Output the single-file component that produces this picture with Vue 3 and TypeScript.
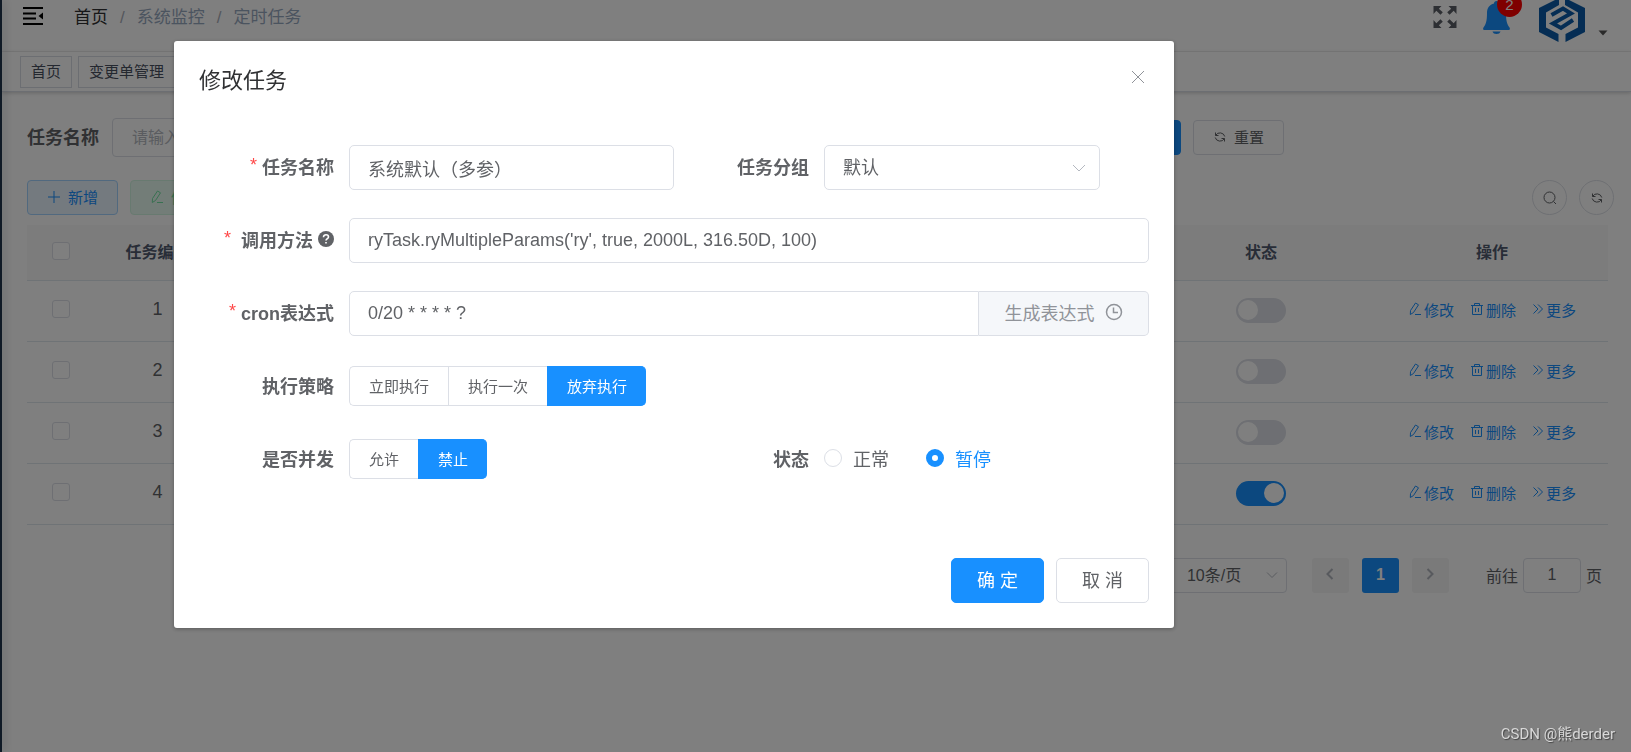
<script setup lang="ts">
import { ref } from 'vue'

interface Job {
  id: number
  running: boolean
}

const jobs = ref<Job[]>([
  { id: 1, running: false },
  { id: 2, running: false },
  { id: 3, running: false },
  { id: 4, running: true },
])

const misfireOptions = ['立即执行', '执行一次', '放弃执行']
const concurrentOptions = ['允许', '禁止']
const statusOptions = ['正常', '暂停']

const form = ref({
  name: '系统默认（多参）',
  group: '默认',
  target: "ryTask.ryMultipleParams('ry', true, 2000L, 316.50D, 100)",
  cron: '0/20 * * * * ?',
  misfire: '放弃执行',
  concurrent: '禁止',
  status: '暂停',
})

const keyword = ref('')
const pageSize = ref('10条/页')
const pageNumber = ref('1')
</script>

<template>
  <div class="app">
    <div class="sidebar"></div>
    <div class="main">
      <header class="navbar">
        <button class="plain" type="button" aria-label="收起菜单">
          <svg width="22" height="20" viewBox="0 0 22 20" fill="none" stroke="#000" stroke-width="2">
            <path d="M1 2h20M1 7.500h13M1 12.500h13M1 18h20" />
            <path d="M21 6.500v7l-4.500-3.500z" fill="#000" stroke="none" />
          </svg>
        </button>
        <nav class="crumbs">
          <a href="#" class="crumb-home">首页</a>
          <span class="sep">/</span>
          <span>系统监控</span>
          <span class="sep">/</span>
          <span>定时任务</span>
        </nav>
        <div class="tools">
          <button class="plain" type="button" aria-label="全屏">
            <svg width="24" height="24" viewBox="0 0 24 24" fill="#5a5e66">
              <g id="corner">
                <path d="M0.500 1h8l-2.700 2.700 4 3.600-2.300 2.500-4.200-4L0.500 9z" />
              </g>
              <use href="#corner" transform="matrix(-1 0 0 1 24 0)" />
              <use href="#corner" transform="matrix(1 0 0 -1 0 24)" />
              <use href="#corner" transform="matrix(-1 0 0 -1 24 24)" />
            </svg>
          </button>
          <button class="plain bell" type="button" aria-label="消息">
            <svg width="27" height="34" viewBox="0 0 27 34" fill="#1890ff">
              <path d="M13.500 1c1.500 0 2.500 1 2.500 2.500C20.500 4.500 23 8 23 13c0 8 1 11 3.500 14.500 0.800 1.200 0.300 2.500-1 2.500h-24c-1.300 0-1.800-1.300-1-2.500C3 24 4 21 4 13c0-5 2.500-8.500 7-9.500C11 2 12 1 13.500 1z" />
              <path d="M9.500 31.500h8c-0.500 1.700-2 2.500-4 2.500s-3.500-0.800-4-2.500z" />
            </svg>
            <span class="badge">2</span>
          </button>
          <button class="plain avatar" type="button" aria-label="用户菜单">
            <svg width="46" height="44" viewBox="0 0 46 44" fill="#0a5ba8">
              <path d="M20 0 0 10v24l19.500 10v-8L7 29.500v-15L20 7z" />
              <path d="M26 0l20 10v24L26.500 44v-8L39 29.500v-15L26 7z" />
              <path d="M12.500 17 24 10.500l8 5L14 25.500l8 4.500L34 22" fill="none" stroke="#0a5ba8" stroke-width="4" />
            </svg>
            <svg class="caret" width="10" height="6" viewBox="0 0 10 6" fill="#555"><path d="M0.500 0.500h9L5 5.500z" /></svg>
          </button>
        </div>
      </header>

      <div class="tags">
        <a href="#" class="tag">首页</a>
        <a href="#" class="tag">变更单管理</a>
      </div>

      <section class="content">
        <div class="search">
          <label for="keyword">任务名称</label>
          <input id="keyword" v-model="keyword" type="text" placeholder="请输入任务名称" />
          <button class="btn primary" type="button" aria-label="搜索"></button>
          <button class="btn" type="button">
            <svg class="ico" width="14" height="14" viewBox="0 0 14 14"><path d="M2.500 2.500v3h3M2.700 5.300A5 5 0 0 1 11.800 6.500M11.500 11.500v-3h-3M11.300 8.700A5 5 0 0 1 2.200 7.500" /></svg>
            <span>重置</span>
          </button>
        </div>

        <div class="actions">
          <button class="btn add" type="button">
            <svg class="ico" width="14" height="14" viewBox="0 0 14 14"><path d="M7 1v12M1 7h12" /></svg>
            <span>新增</span>
          </button>
          <button class="btn edit" type="button" disabled>
            <svg class="ico" width="14" height="14" viewBox="0 0 14 14"><path d="M2.500 8.500 7.500 1l3 1.800-5 7.700-3.200 2zM7 12.500h6" /></svg>
            <span>修改</span>
          </button>
          <div class="round-group">
            <button class="round" type="button" aria-label="显示搜索">
              <svg class="ico" width="14" height="14" viewBox="0 0 14 14"><circle cx="6.500" cy="6.500" r="5.500" /><path d="M10.500 10.500l2.500 2.500" /></svg>
            </button>
            <button class="round" type="button" aria-label="刷新">
              <svg class="ico" width="14" height="14" viewBox="0 0 14 14"><path d="M2.500 2.500v3h3M2.700 5.300A5 5 0 0 1 11.800 6.500M11.500 11.500v-3h-3M11.300 8.700A5 5 0 0 1 2.200 7.500" /></svg>
            </button>
          </div>
        </div>

        <table class="table">
          <colgroup>
            <col class="c-check" /><col class="c-id" /><col /><col class="c-status" /><col class="c-ops" />
          </colgroup>
          <thead>
            <tr>
              <th><input type="checkbox" class="check" aria-label="全选" /></th>
              <th>任务编号</th>
              <th></th>
              <th>状态</th>
              <th>操作</th>
            </tr>
          </thead>
          <tbody>
            <tr v-for="job in jobs" :key="job.id">
              <td><input type="checkbox" class="check" :aria-label="`选择任务 ${job.id}`" /></td>
              <td>{{ job.id }}</td>
              <td></td>
              <td><input v-model="job.running" type="checkbox" role="switch" class="switch" :aria-label="`任务 ${job.id} 状态`" /></td>
              <td>
                <div class="ops">
                  <a href="#">
                    <svg class="ico" width="14" height="14" viewBox="0 0 14 14"><path d="M2.500 8.500 7.500 1l3 1.800-5 7.700-3.200 2zM7 12.500h6" /></svg>修改
                  </a>
                  <a href="#">
                    <svg class="ico" width="14" height="14" viewBox="0 0 14 14"><path d="M1 3.500h12M4.500 3.500v-2h5v2M2.500 3.500v9h9v-9M5.500 6v4M8.500 6v4" /></svg>删除
                  </a>
                  <a href="#">
                    <svg class="ico" width="12" height="14" viewBox="0 0 12 14"><path d="M1.500 2.500 6 7l-4.500 4.500M6 2.500 10.500 7 6 11.500" /></svg>更多
                  </a>
                </div>
              </td>
            </tr>
          </tbody>
        </table>

        <div class="pager">
          <div class="select-box size">
            <select v-model="pageSize" aria-label="每页条数"><option>10条/页</option></select>
            <svg class="chev" width="12" height="8" viewBox="0 0 12 8"><path d="M1 1.500l5 5 5-5" /></svg>
          </div>
          <button class="page" type="button" disabled aria-label="上一页">
            <svg width="8" height="12" viewBox="0 0 8 12"><path d="M6.500 1 1.500 6l5 5" /></svg>
          </button>
          <button class="page current" type="button">1</button>
          <button class="page" type="button" disabled aria-label="下一页">
            <svg width="8" height="12" viewBox="0 0 8 12"><path d="M1.500 1l5 5-5 5" /></svg>
          </button>
          <label class="jump">前往 <input v-model="pageNumber" type="text" /> 页</label>
        </div>
      </section>
    </div>
  </div>

  <div class="overlay">
    <form class="dialog" role="dialog" aria-labelledby="dialog-title" @submit.prevent>
      <div class="dialog-head">
        <h1 id="dialog-title">修改任务</h1>
        <button class="plain close" type="button" aria-label="关闭">
          <svg width="14" height="14" viewBox="0 0 14 14"><path d="M1 1l12 12M13 1 1 13" /></svg>
        </button>
      </div>

      <div class="dialog-body">
        <div class="row half">
          <div class="item">
            <label class="lab" for="f-name"><i>*</i>任务名称</label>
            <input id="f-name" v-model="form.name" class="text" type="text" />
          </div>
          <div class="item">
            <label class="lab" for="f-group">任务分组</label>
            <div class="select-box group">
              <select id="f-group" v-model="form.group"><option>默认</option></select>
              <svg class="chev" width="14" height="8" viewBox="0 0 14 8"><path d="M1 1l6 6 6-6" /></svg>
            </div>
          </div>
        </div>

        <div class="item">
          <label class="lab" for="f-target">
            <i class="wide">*</i>调用方法
            <svg class="help" width="16" height="16" viewBox="0 0 16 16">
              <circle cx="8" cy="8" r="8" fill="#606266" />
              <path d="M5.500 6.200C5.500 4.700 6.600 3.800 8 3.800s2.500 0.900 2.500 2.200C10.500 7.600 8 7.700 8 9.600M8 10.900v1.600" fill="none" stroke="#fff" stroke-width="1.600" />
            </svg>
          </label>
          <input id="f-target" v-model="form.target" class="text" type="text" />
        </div>

        <div class="item">
          <label class="lab" for="f-cron"><i>*</i>cron表达式</label>
          <input id="f-cron" v-model="form.cron" class="text joined" type="text" />
          <button class="append" type="button">
            生成表达式
            <svg width="18" height="18" viewBox="0 0 18 18"><circle cx="9" cy="9" r="7.500" /><path d="M8.500 4.500V9.500h4.500" /></svg>
          </button>
        </div>

        <div class="item" role="radiogroup" aria-labelledby="l-misfire">
          <span id="l-misfire" class="lab">执行策略</span>
          <div class="segments">
            <label v-for="o in misfireOptions" :key="o" :class="{ on: form.misfire === o }">
              <input v-model="form.misfire" type="radio" name="misfire" :value="o" />{{ o }}
            </label>
          </div>
        </div>

        <div class="row half">
          <div class="item" role="radiogroup" aria-labelledby="l-concurrent">
            <span id="l-concurrent" class="lab">是否并发</span>
            <div class="segments">
              <label v-for="o in concurrentOptions" :key="o" :class="{ on: form.concurrent === o }">
                <input v-model="form.concurrent" type="radio" name="concurrent" :value="o" />{{ o }}
              </label>
            </div>
          </div>
          <div class="item" role="radiogroup" aria-labelledby="l-status">
            <span id="l-status" class="lab">状态</span>
            <div class="radios">
              <label v-for="o in statusOptions" :key="o" :class="{ on: form.status === o }">
                <input v-model="form.status" type="radio" name="status" :value="o" />{{ o }}
              </label>
            </div>
          </div>
        </div>
      </div>

      <div class="dialog-foot">
        <button class="big primary" type="submit">确 定</button>
        <button class="big" type="button">取 消</button>
      </div>
    </form>
    <div class="watermark">CSDN @熊derder</div>
  </div>
</template>

<style>
html,
body {
  margin: 0;
  height: 100%;
  overflow: hidden;
  background: #fff;
}
</style>

<style scoped>
.app,
.overlay {
  font-family: "Liberation Sans", "Noto Sans CJK SC", sans-serif;
  color: #606266;
  font-size: 18px;
}
.app *,
.overlay * {
  box-sizing: border-box;
}
.app {
  display: flex;
  min-height: 100vh;
  background: #fff;
}
button,
input,
select {
  font-family: inherit;
  color: inherit;
  margin: 0;
  outline: none;
}
a {
  text-decoration: none;
  color: inherit;
}
.ico {
  fill: none;
  stroke: currentColor;
  stroke-width: 1;
  flex: none;
}
.plain {
  border: 0;
  background: none;
  padding: 0;
  display: flex;
}

.sidebar {
  width: 2px;
  background: #20344c;
  box-shadow: 2px 0 8px rgba(0, 21, 41, 0.35);
  position: relative;
}
.main {
  flex: 1;
  min-width: 0;
}
.navbar {
  height: 52px;
  display: flex;
  align-items: flex-start;
  padding: 0 23px 0 20px;
  border-bottom: 1px solid #f2f2f2;
}
.navbar > .plain {
  margin-top: 6px;
}
.crumbs {
  display: flex;
  gap: 12px;
  margin-left: 30px;
  font-size: 17px;
  line-height: 36px;
  color: #97a8be;
}
.crumb-home {
  color: #303133;
}
.sep {
  color: #a8adb8;
}
.tools {
  margin-left: auto;
  display: flex;
  align-items: flex-start;
}
.tools > .plain {
  margin-top: 5px;
}
.tools > .bell {
  margin: 0 0 0 26px;
  position: relative;
}
.badge {
  position: absolute;
  left: 14px;
  top: -8px;
  width: 25px;
  height: 25px;
  border-radius: 50%;
  background: #f00;
  color: #fff;
  font-size: 15px;
  line-height: 26px;
  text-align: center;
}
.tools > .avatar {
  margin: -2px 0 0 29px;
  align-items: flex-end;
  gap: 13px;
}
.caret {
  margin-bottom: 6px;
}

.tags {
  height: 40px;
  display: flex;
  align-items: center;
  gap: 6px;
  padding-left: 18px;
  border-bottom: 1px solid #d8dce5;
  box-shadow: 0 1px 4px rgba(0, 0, 0, 0.2);
}
.tag {
  height: 32px;
  line-height: 29px;
  border: 1px solid #d8dce5;
  padding: 0 10px;
  font-size: 15px;
  color: #495060;
}

.content {
  padding: 26px 17px 0 25px;
}
.search {
  display: flex;
  align-items: center;
  padding-right: 330px;
}
.search label {
  font-weight: bold;
  width: 85px;
  padding-bottom: 3px;
  white-space: nowrap;
}
.search input {
  height: 39px;
  width: 300px;
  border: 1px solid #dcdfe6;
  border-radius: 4px;
  padding: 0 19px;
  font-size: 16px;
}
.search input::placeholder {
  color: #b4b8c0;
}
.btn {
  height: 35px;
  width: 91px;
  border: 1px solid #dcdfe6;
  border-radius: 4px;
  background: #fff;
  font-size: 15px;
  display: flex;
  align-items: center;
  justify-content: center;
  gap: 7px;
  padding: 0 0 2px;
}
.search .primary {
  margin-left: auto;
  margin-right: 12px;
}
.primary {
  background: #1890ff;
  border-color: #1890ff;
  color: #fff;
}
.actions {
  display: flex;
  align-items: center;
  gap: 12px;
  margin: 23px 0 10px;
}
.add {
  color: #1890ff;
  background: #e8f4ff;
  border-color: #a3d3ff;
}
.edit {
  color: #71e2a3;
  background: #e7faf0;
  border-color: #d0f5e0;
}
.round-group {
  margin-left: auto;
  display: flex;
  gap: 12px;
}
.round {
  width: 35px;
  height: 35px;
  border-radius: 50%;
  border: 1px solid #dcdfe6;
  background: #fff;
  padding: 0;
  display: flex;
  align-items: center;
  justify-content: center;
}

.table {
  width: calc(100% - 6px);
  table-layout: fixed;
  border-collapse: collapse;
}
.c-check {
  width: 68px;
}
.c-id {
  width: 125px;
}
.c-status {
  width: 230px;
}
.c-ops {
  width: 232px;
}
.table th {
  height: 55px;
  background: #f8f8f9;
  color: #515a6e;
  font-size: 16px;
}
.table td {
  height: 61px;
}
.table th,
.table td {
  padding: 0 0 3px;
  text-align: center;
  border-bottom: 1px solid #dfe6ec;
}
.check {
  appearance: none;
  display: block;
  margin: 0 auto;
  width: 18px;
  height: 18px;
  border: 1px solid #dcdfe6;
  border-radius: 3px;
  background: #fff;
}
.switch {
  appearance: none;
  display: flex;
  align-items: center;
  width: 50px;
  height: 25px;
  margin: 2px auto 0;
  padding: 0 2px;
  border-radius: 13px;
  background: #dcdfe6;
}
.switch::before {
  content: "";
  width: 20px;
  height: 20px;
  border-radius: 50%;
  background: #fff;
}
.switch:checked {
  background: #1890ff;
  justify-content: flex-end;
}
.ops {
  display: flex;
  justify-content: center;
  gap: 16px;
  font-size: 15px;
  color: #1890ff;
}
.ops a {
  display: flex;
  align-items: center;
  gap: 2px;
}

.pager {
  display: flex;
  align-items: center;
  justify-content: flex-end;
  margin-top: 33px;
  padding-right: 12px;
  font-size: 16px;
}
.select-box {
  position: relative;
  display: flex;
}
.select-box select {
  appearance: none;
  width: 100%;
  border: 1px solid #dcdfe6;
  border-radius: 4px;
  background: #fff;
}
.chev {
  position: absolute;
  top: 50%;
  margin-top: -4px;
  right: 14px;
  fill: none;
  stroke: #b4b8c0;
}
.size {
  width: 138px;
  margin-right: 25px;
}
.size .chev {
  right: 9px;
}
.size select {
  height: 35px;
  font-size: 16px;
  padding: 0 24px 0 37px;
}
.page {
  width: 37px;
  height: 35px;
  border: 0;
  border-radius: 3px;
  background: #f4f4f5;
  margin-right: 13px;
  font-size: 16px;
  font-weight: bold;
  padding: 0;
}
.page svg {
  fill: none;
  stroke: #b0b4bc;
  stroke-width: 2;
}
.page.current {
  background: #1890ff;
  color: #fff;
}
.jump {
  display: flex;
  align-items: center;
  gap: 5px;
  margin-left: 24px;
}
.jump input {
  width: 58px;
  height: 35px;
  border: 1px solid #dcdfe6;
  border-radius: 4px;
  background: #fff;
  text-align: center;
  font-size: 16px;
}

.overlay {
  position: fixed;
  inset: 0;
  display: flex;
  align-items: flex-start;
  padding: 41px 24px 0 174px;
  background: rgba(0, 0, 0, 0.5);
}
.dialog {
  flex: 0 1 1000px;
  background: #fff;
  border-radius: 3px;
  box-shadow: 0 1px 4px rgba(0, 0, 0, 0.3);
}
.dialog-head {
  display: flex;
  justify-content: space-between;
  padding: 25px 29px 12px 25px;
}
h1 {
  margin: 0;
  font-size: 22px;
  line-height: 30px;
  font-weight: normal;
  color: #303133;
}
.close {
  margin-top: 4px;
}
.close svg {
  fill: none;
  stroke: #909399;
  stroke-width: 1;
}
.dialog-body {
  display: grid;
  gap: 28px;
  padding: 37px 25px 64px;
}
.half {
  display: grid;
  grid-template-columns: 1fr 1fr;
}
.item {
  display: flex;
  align-items: center;
  height: 45px;
}
.lab {
  flex: none;
  width: 150px;
  padding: 0 15px 4px 0;
  display: flex;
  align-items: center;
  justify-content: flex-end;
  font-weight: bold;
  white-space: nowrap;
}
.lab i {
  font-style: normal;
  font-weight: normal;
  color: #ff4949;
  margin-right: 5px;
}
.lab .wide {
  margin-right: 10px;
}
.help {
  margin-left: 5px;
}
.text {
  flex: 1;
  min-width: 0;
  height: 45px;
  border: 1px solid #dcdfe6;
  border-radius: 5px;
  padding: 0 18px;
  font-size: 18px;
  background: #fff;
}
.joined {
  border-radius: 5px 0 0 5px;
}
.append {
  width: 170px;
  height: 45px;
  border: 1px solid #dcdfe6;
  border-left: 0;
  border-radius: 0 5px 5px 0;
  background: #f5f7fa;
  color: #909399;
  font-size: 18px;
  display: flex;
  align-items: center;
  justify-content: center;
  gap: 10px;
  padding: 0 0 3px;
}
.append svg {
  fill: none;
  stroke: #909399;
  stroke-width: 1.500;
}
.group {
  width: 276px;
}
.group select {
  height: 45px;
  font-size: 18px;
  padding: 0 18px;
  border-radius: 5px;
}
.segments {
  display: flex;
  height: 40px;
  margin-bottom: 2px;
  font-size: 15px;
}
.segments label {
  display: flex;
  align-items: center;
  padding: 0 19px;
  border: 1px solid #dcdfe6;
  border-right: 0;
}
.segments label:first-child {
  border-radius: 5px 0 0 5px;
}
.segments label:last-child {
  border-radius: 0 5px 5px 0;
}
.segments .on {
  background: #1890ff;
  border-color: #1890ff;
  color: #fff;
}
.segments input {
  appearance: none;
  width: 0;
  height: 0;
}
.radios {
  display: flex;
  gap: 37px;
  padding-bottom: 4px;
}
.radios label {
  display: flex;
  align-items: center;
  gap: 11px;
}
.radios input {
  appearance: none;
  width: 18px;
  height: 18px;
  border: 1px solid #dcdfe6;
  border-radius: 50%;
}
.radios .on {
  color: #1890ff;
}
.radios input:checked {
  border: 6px solid #1890ff;
}
.dialog-foot {
  display: flex;
  justify-content: flex-end;
  gap: 12px;
  padding: 12px 25px 25px;
}
.big {
  width: 93px;
  height: 45px;
  border: 1px solid #dcdfe6;
  border-radius: 5px;
  background: #fff;
  font-size: 18px;
  padding: 0 0 4px;
}
.big.primary {
  background: #1890ff;
  border-color: #1890ff;
  color: #fff;
}
.watermark {
  position: absolute;
  right: 16px;
  bottom: 8px;
  font-family: Roboto, "Noto Sans CJK SC", sans-serif;
  font-size: 15px;
  line-height: 20px;
  color: #d8d8d8;
  text-shadow: 1px 1px 1px #444;
}
</style>
